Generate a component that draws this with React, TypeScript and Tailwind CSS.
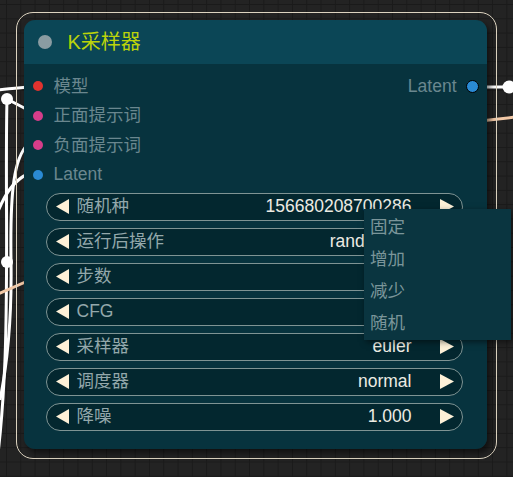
import React from "react";

const inputs = [
  { label: "模型", color: "bg-[#e0332f]" },
  { label: "正面提示词", color: "bg-[#d63d8a]" },
  { label: "负面提示词", color: "bg-[#d63d8a]" },
  { label: "Latent", color: "bg-[#2a8ad4]" },
];

const widgets = [
  { label: "随机种", value: "156680208700286" },
  { label: "运行后操作", value: "randomize" },
  { label: "步数", value: "20" },
  { label: "CFG", value: "8.0" },
  { label: "采样器", value: "euler" },
  { label: "调度器", value: "normal" },
  { label: "降噪", value: "1.000" },
];

const menuItems = ["固定", "增加", "减少", "随机"];

const Wires = () => (
  <svg className="absolute inset-0" width="513" height="477" fill="none">
    {/* left side */}
    <path d="M-4 90 C 8 89, 16 88, 30 87" stroke="#ffffff" strokeWidth="3" />
    <path d="M7 99 L 28 110" stroke="#ffffff" strokeWidth="3" />
    <path d="M7 99 C 5 180, 9 300, 4 380 C 2 420, 0 440, -4 470" stroke="#ffffff" strokeWidth="3" />
    <path d="M28 144 C 14 158, 10 190, 11 260 C 12 320, 8 360, 0 400" stroke="#ffffff" strokeWidth="3" />
    <path d="M28 174 C 14 180, 4 194, -4 217" stroke="#ffffff" strokeWidth="3" />
    <path d="M-4 295 L 30 280" stroke="#f2c8a6" strokeWidth="3" />
    <circle cx="7" cy="99" r="6" fill="#ffffff" />
    <circle cx="7" cy="262" r="6" fill="#ffffff" />
    {/* right side */}
    <path d="M478 87 L 516 87" stroke="#ffffff" strokeWidth="3" />
    <circle cx="509" cy="87" r="6.5" fill="#ffffff" />
    <path d="M480 121 L 516 117" stroke="#f2c8a6" strokeWidth="3" />
  </svg>
);

const LeftArrow = () => (
  <svg width="14" height="15" viewBox="0 0 14 15" className="shrink-0">
    <polygon points="13,0 13,15 0,7.5" fill="#fdf1d8" />
  </svg>
);

const RightArrow = () => (
  <svg width="15" height="15" viewBox="0 0 15 15" className="shrink-0">
    <polygon points="0,0 0,15 14,7.5" fill="#fdf1d8" />
  </svg>
);

export default function App() {
  return (
    <div className="relative w-[513px] h-[477px] overflow-hidden bg-[#232323] bg-[linear-gradient(to_right,#1a1a1a_1px,transparent_1px),linear-gradient(to_bottom,#1a1a1a_1px,transparent_1px)] bg-[size:14.3px_14.3px] bg-[position:6px_4px] font-['Liberation_Sans','Noto_Sans_CJK_SC',sans-serif] pt-[12px] pl-[16px]">
      <Wires />

      {/* selection outline */}
      <div className="relative w-[481px] h-[447px] rounded-[17px] border-[1.5px] border-[#dcd3c0] pt-[6.5px] pl-[6.5px]">
        {/* node */}
        <div className="w-[463px] rounded-[11px] overflow-hidden shadow-[3px_4px_6px_rgba(0,0,0,0.55)]">
          <div className="h-[44px] bg-[#0b4656] flex items-center pl-[14px] gap-[16px]">
            <span className="w-[14px] h-[14px] rounded-full bg-[#8a9ca2]" />
            <span className="text-[20px] leading-none text-[#bcd40a]">K采样器</span>
          </div>

          <div className="bg-[#07333e] pt-[8px] pb-[18px]">
            {inputs.map((inp, i) => (
              <div key={inp.label} className="h-[29.5px] flex items-center pl-[9px]">
                <span className={`w-[10px] h-[10px] rounded-full ${inp.color}`} />
                <span className="ml-[11px] text-[17.5px] leading-none text-[#6a878f]">{inp.label}</span>
                {i === 0 && (
                  <div className="ml-auto mr-[8px] flex items-center gap-[9px]">
                    <span className="text-[17.5px] leading-none text-[#6a878f]">Latent</span>
                    <span className="w-[13px] h-[13px] rounded-full bg-[#2a8ad4] border-[1.5px] border-black" />
                  </div>
                )}
              </div>
            ))}

            <div className="mt-[3px] flex flex-col gap-[7px] ml-[22px] mr-[24px]">
              {widgets.map((w) => (
                <div
                  key={w.label}
                  className="h-[28px] rounded-full border border-[#7f9494] bg-[#03272f] flex items-center pl-[9px] pr-[7px]"
                >
                  <LeftArrow />
                  <span className="ml-[7px] text-[17.5px] leading-none text-[#93a8ab]">{w.label}</span>
                  <span className="ml-auto text-[17.5px] leading-none text-[#ecebe3]">{w.value}</span>
                  <span className="ml-[28px]">
                    <RightArrow />
                  </span>
                </div>
              ))}
            </div>
          </div>
        </div>
      </div>

      {/* combo menu */}
      <div className="absolute left-[364px] top-[209px] w-[147px] h-[131px] bg-[#0a3540] pt-[3px] shadow-[2px_2px_6px_rgba(0,0,0,0.5)]">
        {menuItems.map((m) => (
          <div key={m} className="h-[32px] flex items-center pl-[6px] text-[17.5px] leading-none text-[#7b959a]">
            {m}
          </div>
        ))}
      </div>
    </div>
  );
}
